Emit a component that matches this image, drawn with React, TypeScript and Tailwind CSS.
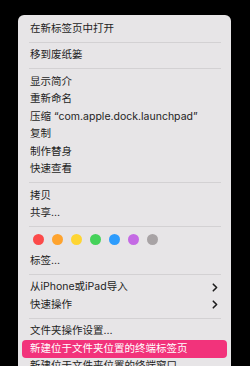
import React from "react";

const Chevron = () => (
  <svg width="6" height="9" viewBox="0 0 6 9" className="shrink-0">
    <path d="M1.3 1.2 L4.6 4.5 L1.3 7.8" fill="none" stroke="#1c1c1c" strokeWidth="1.6" strokeLinecap="round" strokeLinejoin="round" />
  </svg>
);

const Row = ({ label, arrow, active }: { label: string; arrow?: boolean; active?: boolean }) => (
  <div
    className={
      active
        ? "mx-1 h-[17.5px] px-2 flex items-center justify-between rounded-[4px] bg-[#f2337b] text-white"
        : "mx-1 h-[17.5px] px-2 flex items-center justify-between text-[#1e1e1e]"
    }
  >
    <span className="whitespace-pre leading-none">{label}</span>
    {arrow && <span className="mr-[1px] flex items-center"><Chevron /></span>}
  </div>
);

const Sep = () => (
  <div className="h-[9px] flex items-center pl-[11px] pr-[10px]">
    <div className="h-px w-full bg-[#d3d1d3]" />
  </div>
);

const dots = ["#fc4a4a", "#fea32e", "#fed533", "#45d25a", "#2d9cfd", "#c46ae4", "#a8a3a5"];

export default function App() {
  return (
    <div
      className="w-[250px] h-[366px] overflow-hidden bg-black pl-[18px] pt-[15px]"
      style={{ fontFamily: 'Inter, "Noto Sans CJK SC", sans-serif' }}
    >
      <div className="w-[213px] h-[400px] rounded-[6px] bg-[#e7e5e7] pt-[5px] text-[10.5px]">
        <Row label="在新标签页中打开" />
        <Sep />
        <Row label="移到废纸篓" />
        <Sep />
        <Row label="显示简介" />
        <Row label="重新命名" />
        <Row label="压缩 “com.apple.dock.launchpad”" />
        <Row label="复制" />
        <Row label="制作替身" />
        <Row label="快速查看" />
        <Sep />
        <Row label="拷贝" />
        <Row label="共享…" />
        <Sep />
        <div className="h-[21px] pt-[3px] pl-[15px] flex items-start gap-[8px]">
          {dots.map((c) => (
            <div key={c} className="w-[11px] h-[11px] rounded-full" style={{ backgroundColor: c }} />
          ))}
        </div>
        <Row label="标签…" />
        <Sep />
        <Row label="从iPhone或iPad导入" arrow />
        <Row label="快速操作" arrow />
        <Sep />
        <Row label="文件夹操作设置…" />
        <Row label="新建位于文件夹位置的终端标签页" active />
        <Row label="新建位于文件夹位置的终端窗口" />
      </div>
    </div>
  );
}
